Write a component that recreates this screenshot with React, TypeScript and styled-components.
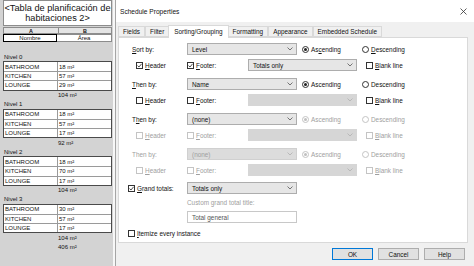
import React from "react";
import styled, { createGlobalStyle } from "styled-components";

const GlobalStyle = createGlobalStyle`
  html, body { margin: 0; padding: 0; }
  body {
    width: 474px;
    height: 266px;
    overflow: hidden;
    background: #f0f0f0;
    font-family: "Liberation Sans", Arial, sans-serif;
  }
  * { box-sizing: border-box; }
`;

type Row = [string, string];
type Group = { name: string; rows: Row[]; total: string };

const groups: Group[] = [
  { name: "Nivel 0", rows: [["BATHROOM", "18 m²"], ["KITCHEN", "57 m²"], ["LOUNGE", "29 m²"]], total: "104 m²" },
  { name: "Nivel 1", rows: [["BATHROOM", "18 m²"], ["KITCHEN", "57 m²"], ["LOUNGE", "17 m²"]], total: "92 m²" },
  { name: "Nivel 2", rows: [["BATHROOM", "18 m²"], ["KITCHEN", "70 m²"], ["LOUNGE", "17 m²"]], total: "104 m²" },
  { name: "Nivel 3", rows: [["BATHROOM", "30 m²"], ["KITCHEN", "57 m²"], ["LOUNGE", "17 m²"]], total: "104 m²" },
];

const tabs = ["Fields", "Filter", "Sorting/Grouping", "Formatting", "Appearance", "Embedded Schedule"];

function Chevron({ $off }: { $off?: boolean }) {
  return (
    <svg width="6" height="4" viewBox="0 0 6 4">
      <polyline points="0.5,0.5 3,3 5.5,0.5" fill="none" stroke={$off ? "#b0b0b0" : "#555"} strokeWidth="0.8" />
    </svg>
  );
}

function Check({ checked, off, children }: { checked?: boolean; off?: boolean; children?: React.ReactNode }) {
  return (
    <Option $off={off}>
      <Box $off={off}>
        {checked && (
          <svg width="5" height="5" viewBox="0 0 5 5">
            <polyline points="0.5,2.6 2,4 4.6,0.8" fill="none" stroke="#222" strokeWidth="0.8" />
          </svg>
        )}
      </Box>
      {children && <span>{children}</span>}
    </Option>
  );
}

function Radio({ checked, off, children }: { checked?: boolean; off?: boolean; children: React.ReactNode }) {
  return (
    <Option $off={off}>
      <Circle $off={off}>{checked && <Dot $off={off} />}</Circle>
      <span>{children}</span>
    </Option>
  );
}

function Select({ value, off, blank }: { value?: string; off?: boolean; blank?: boolean }) {
  return (
    <Combo $off={off} $blank={blank}>
      <span>{value}</span>
      <Chevron $off={off} />
    </Combo>
  );
}

function SortBlock({
  label,
  value,
  off,
  radiosOff,
  rowOff,
  header,
  footer,
  footerValue,
  first,
}: {
  label: React.ReactNode;
  value: string;
  off?: boolean;
  radiosOff?: boolean;
  rowOff?: boolean;
  header?: boolean;
  footer?: boolean;
  footerValue?: string;
  first?: boolean;
}) {
  return (
    <Block>
      <SortRow>
        <Label $off={off}>{label}</Label>
        <Select value={value} off={off} />
        <span />
        <Radio checked off={radiosOff}>
          {first ? <>As<u>c</u>ending</> : "Ascending"}
        </Radio>
        <Radio off={radiosOff}>
          {first ? <><u>D</u>escending</> : "Descending"}
        </Radio>
      </SortRow>
      <HeaderRow>
        <Check checked={header} off={rowOff}>
          <u>H</u>eader
        </Check>
        <Check checked={footer} off={rowOff}>
          <u>F</u>ooter:
        </Check>
        {footerValue ? <Select value={footerValue} /> : <Select off blank />}
        <span />
        <Check off={rowOff}>
          <u>B</u>lank line
        </Check>
      </HeaderRow>
    </Block>
  );
}

export default function App() {
  return (
    <>
      <GlobalStyle />
      <Page>
        <SchedulePanel>
          <TitleBox>
            &lt;Tabla de planificación de
            <br />
            habitaciones 2&gt;
          </TitleBox>
          <LetterRow>
            <LetterCell>A</LetterCell>
            <LetterCell>B</LetterCell>
          </LetterRow>
          <NameRow>
            <NameCell $active>Nombre</NameCell>
            <NameCell>Área</NameCell>
          </NameRow>
          <Spacer />
          {groups.map((g) => (
            <div key={g.name}>
              <GroupLabel>{g.name}</GroupLabel>
              <DataBox>
                {g.rows.map(([n, a]) => (
                  <DataRow key={n}>
                    <DataCell>{n}</DataCell>
                    <DataCell>{a}</DataCell>
                  </DataRow>
                ))}
              </DataBox>
              <SumRow>
                <span />
                <span>{g.total}</span>
              </SumRow>
            </div>
          ))}
          <SumRow>
            <span />
            <span>406 m²</span>
          </SumRow>
        </SchedulePanel>

        <Dialog>
          <TitleBar>
            <span>Schedule Properties</span>
            <svg width="7" height="7" viewBox="0 0 7 7">
              <path d="M0.5 0.5 L6.5 6.5 M6.5 0.5 L0.5 6.5" stroke="#333" strokeWidth="0.8" />
            </svg>
          </TitleBar>
          <TabStrip>
            {tabs.map((t) => (
              <Tab key={t} $active={t === "Sorting/Grouping"}>
                {t}
              </Tab>
            ))}
          </TabStrip>
          <TabPanel>
            <SortBlock
              first
              label={<><u>S</u>ort by:</>}
              value="Level"
              header
              footer
              footerValue="Totals only"
            />
            <SortBlock label={<><u>T</u>hen by:</>} value="Name" />
            <SortBlock label={<>T<u>h</u>en by:</>} value="(none)" radiosOff rowOff />
            <SortBlock label="Then by:" value="(none)" off radiosOff rowOff />

            <GrandRow>
              <Check checked>
                <u>G</u>rand totals:
              </Check>
              <Select value="Totals only" />
            </GrandRow>
            <Indented>
              <Hint>Custom grand total title:</Hint>
              <TextInput>Total general</TextInput>
            </Indented>
            <ItemizeRow>
              <Check>
                <u>I</u>temize every instance
              </Check>
            </ItemizeRow>
          </TabPanel>
          <ButtonRow>
            <Button $primary>OK</Button>
            <Button>Cancel</Button>
            <Button>Help</Button>
          </ButtonRow>
        </Dialog>
      </Page>
    </>
  );
}

const Page = styled.div`
  width: 474px;
  height: 266px;
  display: flex;
  overflow: hidden;
`;

/* ---------- schedule table ---------- */

const SchedulePanel = styled.div`
  flex: none;
  width: 115px;
  height: 266px;
  padding: 0 1px 0 3px;
  background: #d3d3d3;
  border-right: 2px solid #f7f7f7;
  color: #111;
  font-size: 6px;
`;

const TitleBox = styled.div`
  height: 26px;
  padding-top: 2px;
  background: #fff;
  border: 1px solid #8c8c8c;
  text-align: center;
  font-size: 9.2px;
  line-height: 10px;
  white-space: nowrap;
`;

const LetterRow = styled.div`
  display: grid;
  grid-template-columns: 54px 1fr;
  height: 7px;
  margin-top: 1px;
  background: #e4e4e4;
  border: 1px solid #8c8c8c;
`;

const LetterCell = styled.div`
  display: flex;
  align-items: center;
  justify-content: center;
  font-weight: 700;
  font-size: 5.4px;
  & + & { border-left: 1px solid #8c8c8c; }
`;

const NameRow = styled.div`
  display: grid;
  grid-template-columns: 54px 1fr;
  height: 8px;
`;

const NameCell = styled.div<{ $active?: boolean }>`
  display: flex;
  align-items: center;
  justify-content: center;
  background: #fff;
  border: ${(p) => (p.$active ? "1px solid #000" : "1px solid #8c8c8c")};
  border-left: ${(p) => (p.$active ? "1px solid #000" : "none")};
`;

const Spacer = styled.div`
  height: 10px;
`;

const GroupLabel = styled.div`
  height: 9px;
  display: flex;
  align-items: center;
  padding-left: 1px;
`;

const DataBox = styled.div`
  background: #fff;
  border: 1px solid #4a4a4a;
`;

const DataRow = styled.div`
  display: grid;
  grid-template-columns: 53px 1fr;
  height: 9.2px;
  & + & { border-top: 1px solid #9a9a9a; }
`;

const DataCell = styled.div`
  display: flex;
  align-items: center;
  padding-left: 1px;
  & + & { border-left: 1px solid #9a9a9a; }
`;

const SumRow = styled.div`
  display: grid;
  grid-template-columns: 55px 1fr;
  height: 9px;
  align-items: center;
`;

/* ---------- dialog ---------- */

const Dialog = styled.div`
  flex: 1;
  display: flex;
  flex-direction: column;
  background: #f0f0f0;
  border-left: 1px solid #a5a5a5;
  font-size: 6.4px;
  color: #111;
`;

const TitleBar = styled.div`
  height: 22px;
  flex: none;
  display: flex;
  align-items: center;
  justify-content: space-between;
  padding: 0 7px 0 4px;
  background: #fff;
  font-size: 6.6px;
`;

const TabStrip = styled.div`
  height: 15px;
  flex: none;
  display: flex;
  align-items: flex-end;
  padding-left: 2px;
`;

const Tab = styled.div<{ $active?: boolean }>`
  height: ${(p) => (p.$active ? "13px" : "11px")};
  display: flex;
  align-items: center;
  padding: ${(p) => (p.$active ? "0 5px 2px" : "0 4px")};
  margin: ${(p) => (p.$active ? "0 -1px -1px" : "0")};
  position: relative;
  z-index: ${(p) => (p.$active ? 1 : 0)};
  background: ${(p) => (p.$active ? "#fff" : "#f0f0f0")};
  border: 1px solid #d9d9d9;
  border-bottom: ${(p) => (p.$active ? "none" : "1px solid #d9d9d9")};
  & + & { border-left: ${(p) => (p.$active ? "1px solid #d9d9d9" : "none")}; }
  white-space: nowrap;
`;

const TabPanel = styled.div`
  height: 206px;
  flex: none;
  margin: 0 6px 0 2px;
  padding-top: 5px;
  background: #fff;
  border: 1px solid #d9d9d9;
  display: flex;
  flex-direction: column;
`;

const Block = styled.div`
  display: flex;
  flex-direction: column;
  gap: 4px;
  margin-bottom: 7px;
`;

const SortRow = styled.div`
  display: grid;
  grid-template-columns: 55px 110px 5px 60px 1fr;
  align-items: center;
  height: 12px;
  padding-left: 13px;
`;

const HeaderRow = styled.div`
  display: grid;
  grid-template-columns: 51px 61px 109px 9px 1fr;
  align-items: center;
  height: 12px;
  padding-left: 17px;
`;

const Label = styled.span<{ $off?: boolean }>`
  color: ${(p) => (p.$off ? "#a0a0a0" : "#111")};
`;

const Option = styled.span<{ $off?: boolean }>`
  display: inline-flex;
  align-items: center;
  gap: 2px;
  color: ${(p) => (p.$off ? "#a0a0a0" : "#111")};
  white-space: nowrap;
`;

const Box = styled.span<{ $off?: boolean }>`
  width: 7px;
  height: 7px;
  flex: none;
  display: inline-flex;
  align-items: center;
  justify-content: center;
  background: #fff;
  border: 1px solid ${(p) => (p.$off ? "#c4c4c4" : "#333")};
`;

const Circle = styled.span<{ $off?: boolean }>`
  width: 7px;
  height: 7px;
  flex: none;
  display: inline-flex;
  align-items: center;
  justify-content: center;
  border-radius: 50%;
  background: #fff;
  border: 1px solid ${(p) => (p.$off ? "#c4c4c4" : "#333")};
`;

const Dot = styled.span<{ $off?: boolean }>`
  width: 3px;
  height: 3px;
  border-radius: 50%;
  background: ${(p) => (p.$off ? "#c0c0c0" : "#222")};
`;

const Combo = styled.div<{ $off?: boolean; $blank?: boolean }>`
  height: 12px;
  display: flex;
  align-items: center;
  justify-content: space-between;
  padding: 0 3px 0 4px;
  background: ${(p) => (p.$blank ? "#d6d6d6" : p.$off ? "#dcdcdc" : "#e6e6e6")};
  border: 1px solid ${(p) => (p.$blank ? "#d6d6d6" : p.$off ? "#d0d0d0" : "#adadad")};
  color: ${(p) => (p.$off ? "#a0a0a0" : "#111")};
`;

const GrandRow = styled.div`
  display: grid;
  grid-template-columns: 59px 110px;
  align-items: center;
  height: 12px;
  margin-top: -1px;
  padding-left: 9px;
`;

const Indented = styled.div`
  display: flex;
  flex-direction: column;
  width: 178px;
  padding-left: 68px;
  gap: 5px;
  margin-top: 4px;
`;

const Hint = styled.span`
  height: 8px;
  display: flex;
  align-items: center;
  color: #a0a0a0;
`;

const TextInput = styled.div`
  height: 12px;
  display: flex;
  align-items: center;
  padding-left: 4px;
  border: 1px solid #c8c8c8;
  color: #555;
`;

const ItemizeRow = styled.div`
  height: 8px;
  display: flex;
  align-items: center;
  margin-top: 6px;
  padding-left: 9px;
`;

const ButtonRow = styled.div`
  display: flex;
  justify-content: flex-end;
  gap: 5px;
  padding: 5px 9px 0 0;
`;

const Button = styled.div<{ $primary?: boolean }>`
  width: 41px;
  height: 12px;
  display: flex;
  align-items: center;
  justify-content: center;
  background: #e1e1e1;
  border: 1px solid ${(p) => (p.$primary ? "#0078d7" : "#adadad")};
`;
